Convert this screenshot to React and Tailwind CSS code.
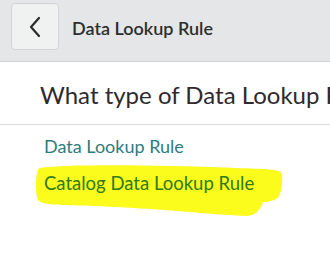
export default function App() {
  return (
    <div className="w-[330px] h-[258px] bg-white overflow-hidden" style={{ fontFamily: "Lato, 'Open Sans', sans-serif" }}>
      <header className="h-[62px] bg-[#e4e6e7] border-b border-[#cfd2d3] flex items-start pl-[11px] pt-[3px] gap-[13px]">
        <button className="w-[48px] h-[47px] rounded-[4px] bg-[#f0f1f1] border border-[#d2d5d6] grid place-items-center text-[#2b2b2b]">
          <svg width="14" height="22" viewBox="0 0 14 22" fill="none" stroke="currentColor" strokeWidth="2.2" strokeLinecap="round" strokeLinejoin="round">
            <polyline points="11,2 3,11 11,20" />
          </svg>
        </button>
        <h1 className="text-[18px] font-semibold text-[#2e2e2e] mt-[12px]">Data Lookup Rule</h1>
      </header>

      <div className="h-[63px] border-b border-[#dadcdd] pl-[40px] pt-[3px] flex items-center">
        <h2 className="text-[24px] text-[#2e2a2e] whitespace-nowrap">What type of Data Lookup Rule?</h2>
      </div>

      <ul className="pl-[44px] pt-[9px] flex flex-col gap-[13px]">
        <li className="text-[18px] text-[#2f7c80] leading-[24px]">Data Lookup Rule</li>
        <li className="relative text-[18.5px] text-[#2f7a1e] leading-[24px]">
          <svg className="absolute left-[-9px] top-[-9px] w-[248px] h-[56px]" viewBox="0 0 248 56" preserveAspectRatio="none">
            <path d="M4 6 C40 2 120 3 200 6 C230 7 246 7 247 12 C248 22 246 30 244 34 C242 38 234 40 228 40 C226 46 222 54 210 54 C170 52 120 46 60 44 C30 43 8 44 3 38 C0 30 0 14 4 6 Z" fill="#fbfb1c" />
          </svg>
          <span className="relative">Catalog Data Lookup Rule</span>
        </li>
      </ul>
    </div>
  );
}
